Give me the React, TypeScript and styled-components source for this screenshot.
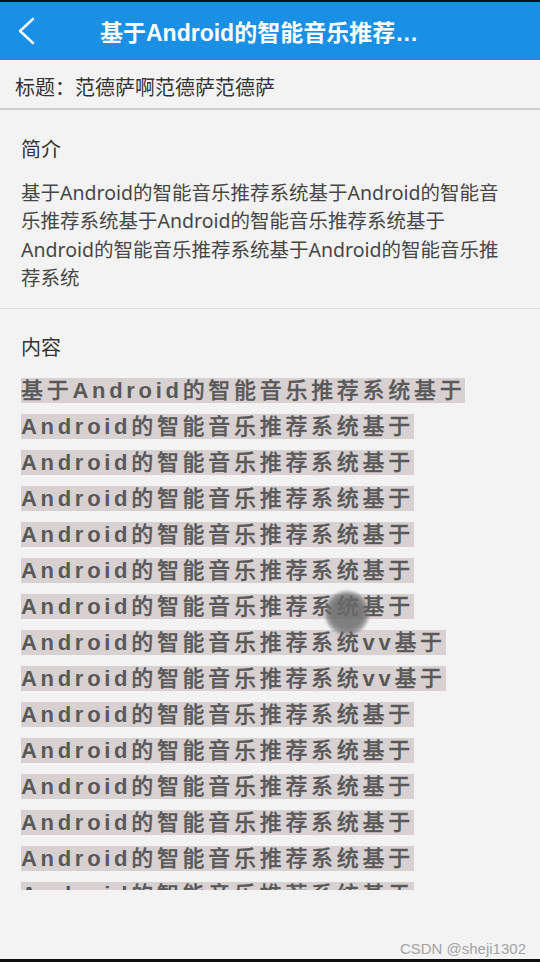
import React from 'react';
import styled, { createGlobalStyle } from 'styled-components';

const GlobalStyle = createGlobalStyle`
  html, body {
    margin: 0;
    padding: 0;
    background: #f3f3f3;
  }
  body {
    font-family: "Liberation Sans", "Noto Sans CJK SC", sans-serif;
  }
`;

const Frame = styled.div`
  position: relative;
  height: 100vh;
  box-sizing: border-box;
  border-top: 2px solid #0e0e0e;
  border-bottom: 3px solid #0e0e0e;
  background: #f3f3f3;
  display: flex;
  flex-direction: column;
  overflow: hidden;
`;

const NavBar = styled.header`
  height: 58px;
  flex-shrink: 0;
  background: #1a8fe6;
  display: flex;
  align-items: center;
`;

const BackButton = styled.button`
  width: 100px;
  height: 100%;
  padding: 0 0 0 17px;
  border: none;
  background: none;
  display: flex;
  align-items: center;
  cursor: pointer;
`;

const NavTitle = styled.h1`
  flex: 1;
  min-width: 0;
  margin: 0;
  color: #fff;
  font-size: 23px;
  font-weight: bold;
  text-align: center;
  white-space: nowrap;
  overflow: hidden;
  text-overflow: ellipsis;
`;

const NavSpacer = styled.div`
  width: 100px;
`;

const TitleRow = styled.div`
  height: 50px;
  flex-shrink: 0;
  box-sizing: border-box;
  padding: 4px 0 0 15px;
  display: flex;
  align-items: center;
  border-bottom: 2px solid #cdcdcd;
  color: #333;
  font-size: 20px;
`;

const Section = styled.section<{ $divider?: boolean }>`
  padding: ${p => (p.$divider ? '28px 24px 15px 21px' : '27px 21px 0')};
  border-bottom: ${p => (p.$divider ? '1px solid #e1e1e1' : 'none')};
`;

const Label = styled.div`
  font-size: 20px;
  line-height: 24px;
  color: #333;
`;

const Intro = styled.p`
  margin: 17px 0 0;
  font-family: "Noto Sans", "Noto Sans CJK SC", sans-serif;
  font-size: 19.5px;
  line-height: 28.4px;
  color: #474747;
`;

const ContentBox = styled.div`
  margin-top: 13px;
  height: 517px;
  overflow: hidden;
`;

const Mark = styled.span`
  font-size: 22px;
  line-height: 36px;
  font-weight: 500;
  letter-spacing: 3.7px;
  color: #595959;
  background: #d7d1d2;
  -webkit-text-stroke: 0.3px #595959;
`;

const Latin = styled.span`
  font-weight: bold;
  -webkit-text-stroke: 0;
`;

const Watermark = styled.div`
  position: absolute;
  right: 14px;
  bottom: 2px;
  font-size: 15px;
  color: #a3a3a3;
`;

const TouchDot = styled.div`
  position: absolute;
  left: 325px;
  top: 589px;
  width: 44px;
  height: 44px;
  border-radius: 50%;
  background: radial-gradient(circle, rgba(105, 105, 105, 0.85) 50%, rgba(130, 130, 130, 0) 100%);
  filter: blur(1.5px);
`;

const base = 'Android的智能音乐推荐系统基于';
const alt = 'Android的智能音乐推荐系统vv基于';

const lines = [
  '基于' + base,
  ...Array(6).fill(base),
  alt,
  alt,
  ...Array(7).fill(base),
];

const intro = Array(5).fill('基于Android的智能音乐推荐系统').join('');

// latin words are set bold, the chinese runs stay lighter
const renderLine = (line: string) =>
  line.split(/([A-Za-z]+)/).map((part, i) =>
    /^[A-Za-z]+$/.test(part) ? <Latin key={i}>{part}</Latin> : part
  );

const App: React.FC = () => {
  return (
    <>
      <GlobalStyle />
      <Frame>
        <NavBar>
          <BackButton aria-label="返回">
            <svg width="18" height="28" viewBox="0 0 18 28">
              <polyline
                points="16,2 3,14 16,26"
                fill="none"
                stroke="#fff"
                strokeWidth="2.4"
                strokeLinecap="round"
                strokeLinejoin="round"
              />
            </svg>
          </BackButton>
          <NavTitle>基于Android的智能音乐推荐系统</NavTitle>
          <NavSpacer />
        </NavBar>

        <TitleRow>标题：范德萨啊范德萨范德萨</TitleRow>

        <Section $divider>
          <Label>简介</Label>
          <Intro>{intro}</Intro>
        </Section>

        <Section>
          <Label>内容</Label>
          <ContentBox>
            {lines.map((line, i) => (
              <React.Fragment key={i}>
                <Mark>{renderLine(line)}</Mark>
                <br />
              </React.Fragment>
            ))}
          </ContentBox>
        </Section>

        <TouchDot />
        <Watermark>CSDN @sheji1302</Watermark>
      </Frame>
    </>
  );
};

export default App;
